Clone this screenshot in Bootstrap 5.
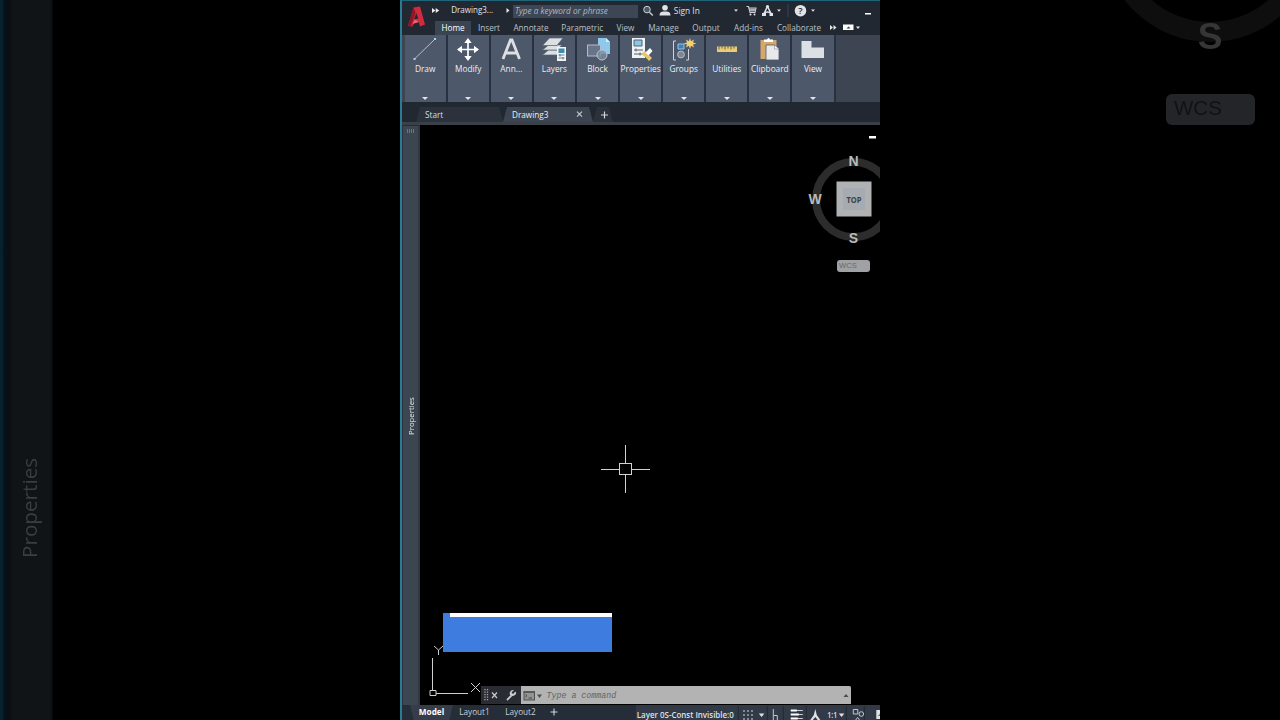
<!DOCTYPE html>
<html lang="en">
<head>
<meta charset="utf-8">
<meta name="viewport" content="width=device-width, initial-scale=1">
<title>Drawing3</title>
<link href="https://cdn.jsdelivr.net/npm/bootstrap@5.3.0/dist/css/bootstrap.min.css" rel="stylesheet">
<style>
body{width:1280px;height:720px;background:#000;font-family:"Open Sans","Noto Sans",sans-serif;font-size:8.2px;font-weight:500;line-height:12px;color:#dfe2e6}
svg{display:block;flex:none}
.side{width:400px;height:720px;overflow:hidden}
.side-rail{width:53px;background:linear-gradient(90deg,#06222c 0 2px,#04131b 4px,#0a0e13 8px,#101417 14px 50px,#060809 53px)}
.vtext{writing-mode:vertical-rl;transform:rotate(180deg);white-space:nowrap}
.side-rail .vtext{font-size:20.7px;line-height:24px;color:#3a3d41;margin:458px 0 0 17px;height:100px;filter:blur(.5px)}
.app{width:480px;height:720px;background:#222831;border-left:2px solid #2c7b96;border-top:1px solid #21657b;overflow:hidden}
.head{height:34px;padding-left:2.5px}
.logo-a{width:30.5px;padding:4px 0 0 2.5px}
.bar{height:20px}
.search{width:125px;height:13px;background:#3d4654;color:#b0b6bf;font-style:italic;padding-left:2px;line-height:11.5px;white-space:nowrap}
.tabs{height:14px;color:#bcc1c8;white-space:nowrap}
.tabs .tab{text-align:center;line-height:13px}
.tabs .active-tab{background:#3b4452;color:#fff}
.ribbon{height:67px;background:#3c4551;padding-left:2.6px}
.panel{width:43.1px;height:67px;background:#4d586b;border-right:2px solid #283142;font-size:8.3px;color:#eceff3;position:relative;white-space:nowrap}
.panel svg.ico{height:25px;width:28px;margin-top:2px}
.panel .lab{line-height:14px;display:block}
.caret{width:0;height:0;border:3px solid transparent;border-top-color:#e4e6e9;border-bottom:0;flex:none}
.panel .caret{margin:auto auto 2px}
.docs{height:20px;color:#d8dce1;line-height:15px;padding-top:5px}
.doc{height:15px;background:#2b323c;clip-path:polygon(4px 0,calc(100% - 4px) 0,100% 100%,0 100%)}
.doc.on{background:#3b4450;color:#eef0f3}
.strip{height:3px;background:#3b3f48}
.rail{width:18px;background:#3b4651;border-left:1px solid #29333e;border-top:1px solid #262c36;border-right:2px solid #303841}
.rail .vtext{color:#e6e9ed;font-size:7.8px;line-height:12px;height:38px}
.canvas{background:#000;overflow:hidden;position:relative;flex:1}
.canvas>*{position:absolute}
.wcs{left:417px;top:135px;width:33px;height:12px;border-radius:3px;background:#a0a1a5;color:#66686c;font:7.6px/11px "Liberation Sans",sans-serif;padding-left:2px}
.blue{left:23px;top:488px;width:169px;height:39px;background:#3e7ddf}
.white{left:30px;top:488px;width:162px;height:4px;background:#fff}
.cmd{left:61px;top:561px;width:370px;height:18px;background:#292d33}
.cmd-in{width:330.5px;height:18px;background:#b2b3b2;color:#626466;font:italic 8.3px/18px "Liberation Mono",monospace;border-radius:0 2px 0 0}
.cmd-in span{padding-top:2px}
.foot{height:16px;background:#252d38;white-space:nowrap}
.layouts{color:#c9ced5;width:234px}
.layouts .on{background:#343d49;color:#fff;font-weight:700;width:43px;clip-path:polygon(0 0,100% 0,calc(100% - 4px) 100%,4px 100%)}
.status{background:#313a46;flex:1;color:#e5e8ec}
.ghost-wcs{left:1166px;top:94px;width:89px;height:31px;border-radius:6px;background:#242528;color:#111214;font:20.5px/28px "Liberation Sans",sans-serif;padding-left:8px;filter:blur(.7px)}
</style>
</head>
<body class="d-flex overflow-hidden position-relative">
<aside class="side d-flex"><div class="side-rail"><div class="vtext">Properties</div></div></aside>

<main class="app d-flex flex-column flex-shrink-0">
  <header class="head d-flex flex-shrink-0">
    <div class="logo-a"><svg width="19" height="23" viewBox="0 0 19 23"><path d="M1 21 6.500 2.500 13 1.500 18 19.500 13 21.500 11.800 17 7 18 5.500 21.500Z" fill="#d42a3e"/><path d="m1 21 5.500-18.500 2 5-3 9.500-1.500 4.500Z" fill="#8f1527"/><path d="M9.300 8 7 14.500l4.300-1Z" fill="#222831"/><path d="m5.500 19 6.300-2-4-2.500Z" fill="#f0626e"/></svg></div>
    <div class="flex-grow-1">
      <div class="bar d-flex align-items-center">
        <svg width="78" height="20" class="overflow-visible"><path d="m-3 7 3.500 2.500L-3 12ZM.7 7l3.500 2.500L.7 12Z" fill="#e8eaed"/><text x="16.200" y="12.300" fill="#e2e5e9" textLength="42" lengthAdjust="spacingAndGlyphs">Drawing3...</text><path d="m71.500 7 3 2.500-3 2.500Z" fill="#e8eaed"/></svg>
        <div class="search">Type a keyword or phrase</div>
        <svg width="239" height="20" fill="#dfe2e6"><g transform="translate(1)"><circle cx="8" cy="8.600" r="3.300" fill="#4d5967" stroke="#ccd0d4"/><path d="m10.500 11.200 3.300 3.300" stroke="#ccd0d4" stroke-width="1.400"/><circle cx="26" cy="6.800" r="2.800"/><path d="M20.500 14.500q0-4 4-4h3q4 0 4 4Z"/><text x="34.800" y="12.800" textLength="26" lengthAdjust="spacingAndGlyphs">Sign In</text><path d="M95 8.500h4l-2 2.300ZM138 8.500h4l-2 2.300ZM172 8.500h4l-2 2.300Z"/><path d="M107.500 5.500h2l1.500 6h5l1-4.500h-7" fill="none" stroke="#ccd0d4" stroke-width="1.100"/><path d="M110.500 7.500h6l-1 3h-4Z" fill="#a9aeb5"/><circle cx="111.500" cy="13.500" r="1"/><circle cx="115.500" cy="13.500" r="1"/><path d="m128.500 5.500-4 8m4-8 4 8m-8-1q4-3 8 0" fill="none" stroke="#dfe2e6" stroke-width="1.500"/><circle cx="128.500" cy="5.500" r="1.600"/><path d="M123 12h4v3h-4ZM130.500 12h3.500v3h-3.500Z"/><path d="M149 3v13" stroke="#3d4550"/><circle cx="161.500" cy="9.700" r="5.800"/><text x="161.500" y="13" fill="#222831" font-size="9.500" font-weight="600" text-anchor="middle">?</text><path d="M226 12h6v1.500h-6Z" fill="#fff"/></g></svg>
      </div>
      <nav class="tabs d-flex">
        <div class="tab active-tab" style="width:36px">Home</div><div class="tab" style="width:36px">Insert</div><div class="tab" style="width:48px">Annotate</div><div class="tab" style="width:54.500px">Parametric</div><div class="tab" style="width:32px">View</div><div class="tab" style="width:44px">Manage</div><div class="tab" style="width:41px">Output</div><div class="tab" style="width:44px">Add-ins</div><div class="tab" style="width:57px">Collaborate</div>
        <svg width="34" height="14" fill="#e6e8eb"><path d="m2 4 3 2.500L2 9ZM5.500 4l3 2.500-3 2.500Z"/><rect x="15" y="3.500" width="10.500" height="5.500" fill="#fff"/><path d="m18.500 7.500 2-2 2 2Z" fill="#333a44"/><path d="M28 5.500h4L30 8Z"/></svg>
      </nav>
    </div>
  </header>

  <section class="ribbon d-flex flex-shrink-0">
    <div class="panel d-flex flex-column align-items-center"><svg class="ico" viewBox="0 0 28 25"><path d="M3.500 22 24 2" stroke="#b2bfd0"/><path d="M2.500 21h2v2h-2ZM23 1h2v2h-2Z" fill="#a7d6f3"/></svg><span class="lab">Draw</span><i class="caret"></i></div>
    <div class="panel d-flex flex-column align-items-center"><svg class="ico" viewBox="0 0 28 25"><path d="M14 3v19M4 12.500h20" stroke="#fff" stroke-width="1.700"/><path d="m14 1 3.700 5h-7.400ZM14 24l3.700-5h-7.400ZM3 12.500l5-3.700v7.400ZM25 12.500l-5-3.700v7.400Z" fill="#fff"/></svg><span class="lab">Modify</span><i class="caret"></i></div>
    <div class="panel d-flex flex-column align-items-center"><svg class="ico" viewBox="0 0 28 25"><path d="m6 22 7.500-19h1.500L22.500 22M8.800 16h11" fill="none" stroke="#dddfe2" stroke-width="2.800"/></svg><span class="lab">Ann...</span><i class="caret"></i></div>
    <div class="panel d-flex flex-column align-items-center"><svg class="ico" viewBox="0 0 28 25"><g fill="#dce0e3" stroke="#586273" stroke-width=".7"><path d="m2.500 18 6-5H22l-5 5Z"/><path d="m2.500 13 6-5H22l-5 5Z"/><path d="m2.500 8.500 7-7.500H23l-6 7.500Z"/></g><rect x="17" y="10" width="9" height="14" fill="#f1f3f5"/><path d="M18.500 11.500h6v4.500h-6Z" fill="#408cae"/><path d="M18.500 18h6M18.500 21h6M20 17v2.500M23 20v2.500" stroke="#596270" stroke-width=".8"/></svg><span class="lab">Layers</span><i class="caret"></i></div>
    <div class="panel d-flex flex-column align-items-center"><svg class="ico" viewBox="0 0 28 25"><path d="M14 1h8l4 4v12H14Z" fill="#8cc9ec"/><path d="M22 1v4h4Z" fill="#d8effb"/><rect x="3.500" y="8" width="13" height="11" fill="#68748a" stroke="#b6bcc7"/><circle cx="18" cy="18" r="5" fill="#7b8ca4" fill-opacity=".8" stroke="#b9c4d1"/></svg><span class="lab">Block</span><i class="caret"></i></div>
    <div class="panel d-flex flex-column align-items-center"><svg class="ico" viewBox="0 0 28 25"><rect x="5" y="1" width="13" height="20" fill="#f0f2f3"/><path d="M7 3h8v6H7Z" fill="#8bc6e6" stroke="#536172"/><path d="M7 13h9M7 17h8M9 11.500v3M13 15.500v3" stroke="#56606e"/><path d="m14 17 4-3 7 7-3 3q-2-3-8-7" fill="#eac66a"/><path d="m18.500 15.500 4.500-4.500 2.500 3-4 4.500Z" fill="#fff"/></svg><span class="lab">Properties</span><i class="caret"></i></div>
    <div class="panel d-flex flex-column align-items-center"><svg class="ico" viewBox="0 0 28 25"><path d="M6 4H3.500v19H6M16 23h2.500V12" fill="none" stroke="#d0d4da"/><path d="M8 7h6v5H8Z" fill="#467cae" stroke="#8ec6ee"/><circle cx="11" cy="17.500" r="3.400" fill="#7c8794" stroke="#b5bcc5"/><path d="m20 1 1.100 3.200L24 2.500l-1 3 3.500 1-3.500 1 1 3-2.900-1.700L20 12l-1.100-3.200L16 10.500l1-3-3.500-1 3.500-1-1-3 2.900 1.700Z" fill="#f5d06c"/></svg><span class="lab">Groups</span><i class="caret"></i></div>
    <div class="panel d-flex flex-column align-items-center"><svg class="ico" viewBox="0 0 28 25"><rect x="4" y="9.500" width="20" height="5.500" fill="#edcb73"/><path d="M6 9.500v3m3-3v2m3-2v3m3-3v2m3-2v3m3-3v2" stroke="#5c553c" stroke-width=".9"/></svg><span class="lab">Utilities</span><i class="caret"></i></div>
    <div class="panel d-flex flex-column align-items-center"><svg class="ico" viewBox="0 0 28 25"><rect x="4.500" y="3" width="16" height="19" fill="#d6a768"/><path d="M8 2.500h3q1.500-3 3 0h3V5H8Z" fill="#fff"/><path d="M10 8h8.500l4.500 4v11H10Z" fill="#e8e9ea" stroke="#4d586b" stroke-width=".8"/><path d="M18.500 8v4H23Z" fill="#fff" stroke="#7b8290" stroke-width=".6"/></svg><span class="lab">Clipboard</span><i class="caret"></i></div>
    <div class="panel d-flex flex-column align-items-center"><svg class="ico" viewBox="0 0 28 25"><path d="M2.500 4h10v6.500H25V21H2.500Z" fill="#dcdfe3"/></svg><span class="lab">View</span><i class="caret"></i></div>
  </section>

  <div class="docs d-flex flex-shrink-0">
    <div class="doc" style="width:87px;margin-left:14px;padding-left:9px">Start</div>
    <div class="doc on d-flex" style="width:90px;padding-left:9px"><span style="width:64px">Drawing3</span><svg width="7" height="14"><path d="m1 4.700 5 5m0-5-5 5" stroke="#c8ccd1" stroke-width="1.100"/></svg></div>
    <div class="doc" style="width:20px"><svg width="20" height="14"><path d="M11.500 4.500v7M8 8h7" stroke="#d1d5da" stroke-width="1.200"/></svg></div>
  </div>
  <div class="strip flex-shrink-0"></div>

  <section class="d-flex flex-shrink-0" style="height:580px">
    <div class="rail flex-shrink-0 d-flex flex-column align-items-center"><svg width="8" height="4" style="margin-top:3px"><path d="M0 1h8M0 3h8" stroke="#9aa2ab" stroke-dasharray="1 1"/></svg><div class="vtext" style="margin-top:264px">Properties</div></div>
    <div class="canvas">
      <svg width="460" height="580" style="left:0;top:0" font-family="Liberation Sans, Arial, sans-serif">
        <path d="M449 11h7v2.500h-7Z" fill="#fff"/>
        <circle cx="433.500" cy="74.500" r="37.500" fill="none" stroke="#2c2c2d" stroke-width="8"/>
        <rect x="416.500" y="56.500" width="35" height="35" fill="#b0b1b2"/><rect x="423" y="63" width="22" height="22" fill="#a5abb0"/>
        <text x="434" y="77.500" text-anchor="middle" font-size="9" font-weight="700" fill="#3d4144" textLength="15" lengthAdjust="spacingAndGlyphs" font-family="Open Sans">TOP</text>
        <g font-size="14" font-weight="700" fill="#b9bbbc" text-anchor="middle"><text x="433.500" y="40.500">N</text><text x="395" y="79">W</text><text x="433.500" y="118">S</text></g>
        <g fill="none" stroke="#d2d2d2" shape-rendering="crispEdges"><path d="M205.500 320v19M205.500 350v18M181 344.500h19M211 344.500h19"/><rect x="199.500" y="338.500" width="12" height="11"/></g>
        <g fill="none" stroke="#cfcfcf"><path d="M12.500 533v32M16 568.500h32"/><path d="M10 565.500h6v5h-6Z"/><path d="m51 558 9 9m0-9-9 9M14 521l4.500 4 4.500-4M18.500 525v5"/></g>
      </svg>
      <div class="blue"></div><div class="white"></div>
      <div class="wcs">WCS</div>
      <div class="cmd d-flex">
        <svg width="39.500" height="18"><path d="M4 3v12M6.500 3v12" stroke="#a3a7ab" stroke-dasharray="1.300 1.200" stroke-width="1.300"/><path d="m11 6.500 5 5.500m0-5.500-5 5.500" stroke="#c7cacd" stroke-width="1.200"/><path d="m26 14 5.500-5.500" stroke="#c7cacd" stroke-width="1.800"/><path d="M34.500 5.500 32 8l-1.500-1.500L33 4q-3-.5-4 2t1 3.500 4-.5 .5-3.500" fill="#c7cacd"/></svg>
        <div class="cmd-in d-flex align-items-center"><svg width="26" height="17"><rect x="3" y="5" width="10.500" height="8" fill="#929493" stroke="#4c5052"/><path d="M2.500 5h11.500" stroke="#4c5052" stroke-width="1.500"/><path d="m4.500 7.500 1.500 1.300-1.500 1.300M7.500 11H11" fill="none" stroke="#333" stroke-width=".8"/><path d="M16 7.500h5L18.500 11Z" fill="#4a4d50"/></svg><span>Type a command</span><svg width="8" height="17" class="ms-auto"><path d="m.5 10 2.500-3 2.500 3Z" fill="#4a4d50"/></svg></div>
      </div>
    </div>
  </section>

  <footer class="foot d-flex flex-shrink-0">
    <div class="layouts d-flex" style="padding-left:8px;line-height:14px"><div class="on text-center">Model</div><div class="text-center" style="width:43px">Layout1</div><div class="text-center" style="width:49px">Layout2</div><svg width="17" height="14"><path d="M9 3.500v7M5.500 7h7" stroke="#d1d5da" stroke-width="1.100"/></svg></div>
    <div class="status"><svg width="244" height="16" fill="#dfe2e6"><g transform="translate(.8)"><text x="0" y="12.800" font-weight="600" textLength="97" lengthAdjust="spacingAndGlyphs">Layer 0S-Const Invisible:0</text><path d="M101.500 1v15M130.500 1v15M146.500 1v15M169.500 1v15M209.500 1v15M227.500 1v15" stroke="#222a33"/><g stroke="#cdd1d7" stroke-width="1.400" stroke-dasharray="1.400 2.600"><path d="M106.500 6h10M106.500 10h10M106.500 14h10"/></g><path d="M122 8.500h5.500l-2.700 3.500ZM202 8.500h5.500l-2.700 3.500Z"/><path d="M136.500 4v11M137 10.500h3.500v4.500" fill="none" stroke="#c3c8d0"/><path d="M154 5.500h12M154 9.500h12M154 13.500h12" stroke="#cdd1d7"/><path d="M154 5.500h6M154 9.500h8M154 13.500h7" stroke="#fff" stroke-width="2"/><path d="m178.500 4 1.500 6 3.500 5H181l-2.500-3-2.500 3h-2.500l3.500-5Z"/><text x="190.500" y="12.800" font-weight="600" textLength="10" lengthAdjust="spacingAndGlyphs">1:1</text><g fill="none" stroke="#c3c8d0"><path d="M216.500 4.500h4.500v4.500h-4.500Z"/><circle cx="224.500" cy="9" r="2.300"/><path d="m218.500 15.500 2.300-3 2.300 3"/></g><path d="M239.500 5h6v9h-6Z"/><path d="m241 11 4-4v4Z" fill="#6b737e"/></g></svg></div>
  </footer>
</main>

<aside class="side overflow-visible">
  <svg class="position-absolute" width="200" height="60" style="left:1080px;top:0;filter:blur(.7px)"><circle cx="130" cy="-66" r="98" fill="none" stroke="#0e0e0f" stroke-width="20"/><text x="130" y="49" text-anchor="middle" font-size="37" font-weight="700" font-family="Liberation Sans" fill="#363637">S</text></svg>
  <div class="ghost-wcs position-absolute">WCS</div>
</aside>
<script src="https://cdn.jsdelivr.net/npm/bootstrap@5.3.0/dist/js/bootstrap.bundle.min.js"></script>
</body>
</html>
